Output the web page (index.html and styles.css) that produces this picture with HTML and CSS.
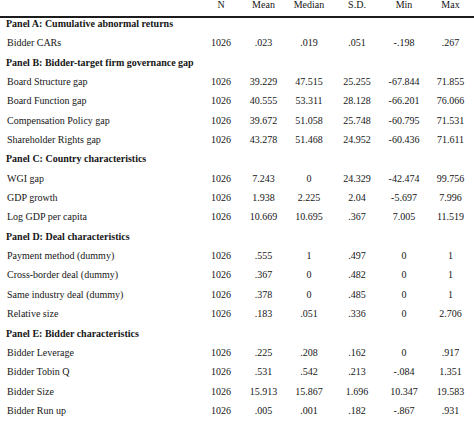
FILE: index.html
```html
<!DOCTYPE html>
<html>
<head>
<meta charset="utf-8">
<link rel="stylesheet" href="styles.css">
</head>
<body>
<table class="stats">
  <colgroup>
    <col class="c-label"><col class="c-n"><col class="c-mean"><col class="c-med"><col class="c-sd"><col class="c-min"><col class="c-max">
  </colgroup>
  <thead>
    <tr><th></th><th>N</th><th>Mean</th><th>Median</th><th>S.D.</th><th>Min</th><th>Max</th></tr>
  </thead>
  <tbody>
    <tr class="panel"><td colspan="7">Panel A: Cumulative abnormal returns</td></tr>
    <tr><td>Bidder CARs</td><td>1026</td><td>.023</td><td>.019</td><td>.051</td><td>-.198</td><td>.267</td></tr>
    <tr class="panel"><td colspan="7">Panel B: Bidder-target firm governance gap</td></tr>
    <tr><td>Board Structure gap</td><td>1026</td><td>39.229</td><td>47.515</td><td>25.255</td><td>-67.844</td><td>71.855</td></tr>
    <tr><td>Board Function gap</td><td>1026</td><td>40.555</td><td>53.311</td><td>28.128</td><td>-66.201</td><td>76.066</td></tr>
    <tr><td>Compensation Policy gap</td><td>1026</td><td>39.672</td><td>51.058</td><td>25.748</td><td>-60.795</td><td>71.531</td></tr>
    <tr><td>Shareholder Rights gap</td><td>1026</td><td>43.278</td><td>51.468</td><td>24.952</td><td>-60.436</td><td>71.611</td></tr>
    <tr class="panel"><td colspan="7">Panel C: Country characteristics</td></tr>
    <tr><td>WGI gap</td><td>1026</td><td>7.243</td><td>0</td><td>24.329</td><td>-42.474</td><td>99.756</td></tr>
    <tr><td>GDP growth</td><td>1026</td><td>1.938</td><td>2.225</td><td>2.04</td><td>-5.697</td><td>7.996</td></tr>
    <tr><td>Log GDP per capita</td><td>1026</td><td>10.669</td><td>10.695</td><td>.367</td><td>7.005</td><td>11.519</td></tr>
    <tr class="panel"><td colspan="7">Panel D: Deal characteristics</td></tr>
    <tr><td>Payment method (dummy)</td><td>1026</td><td>.555</td><td>1</td><td>.497</td><td>0</td><td>1</td></tr>
    <tr><td>Cross-border deal (dummy)</td><td>1026</td><td>.367</td><td>0</td><td>.482</td><td>0</td><td>1</td></tr>
    <tr><td>Same industry deal (dummy)</td><td>1026</td><td>.378</td><td>0</td><td>.485</td><td>0</td><td>1</td></tr>
    <tr><td>Relative size</td><td>1026</td><td>.183</td><td>.051</td><td>.336</td><td>0</td><td>2.706</td></tr>
    <tr class="panel"><td colspan="7">Panel E: Bidder characteristics</td></tr>
    <tr><td>Bidder Leverage</td><td>1026</td><td>.225</td><td>.208</td><td>.162</td><td>0</td><td>.917</td></tr>
    <tr><td>Bidder Tobin Q</td><td>1026</td><td>.531</td><td>.542</td><td>.213</td><td>-.084</td><td>1.351</td></tr>
    <tr><td>Bidder Size</td><td>1026</td><td>15.913</td><td>15.867</td><td>1.696</td><td>10.347</td><td>19.583</td></tr>
    <tr><td>Bidder Run up</td><td>1026</td><td>.005</td><td>.001</td><td>.182</td><td>-.867</td><td>.931</td></tr>
  </tbody>
</table>
</body>
</html>
```
FILE: styles.css
```css
html, body {
  margin: 0;
  padding: 0;
  background: #ffffff;
}
body {
  font-family: "Liberation Serif", "Times New Roman", serif;
  font-size: 10px;
  color: #161616;
}
.stats {
  width: 474px;
  border-collapse: collapse;
  table-layout: fixed;
}
.c-label { width: 200px; }
.c-n { width: 42px; }
.c-mean { width: 43px; }
.c-med { width: 48px; }
.c-sd { width: 48px; }
.c-min { width: 46px; }
.c-max { width: 47px; }
.stats th {
  font-weight: normal;
  line-height: 10px;
  padding: 0 0 6px 0;
  text-align: center;
  border-bottom: 2px solid #1c1c1c;
}
.stats td {
  line-height: 12px;
  padding: 0 0 7.35px 0;
  text-align: center;
  white-space: nowrap;
}
.stats td:first-child {
  text-align: left;
  padding-left: 7px;
}
.stats .panel td {
  font-weight: bold;
  padding-left: 6px;
}
```
